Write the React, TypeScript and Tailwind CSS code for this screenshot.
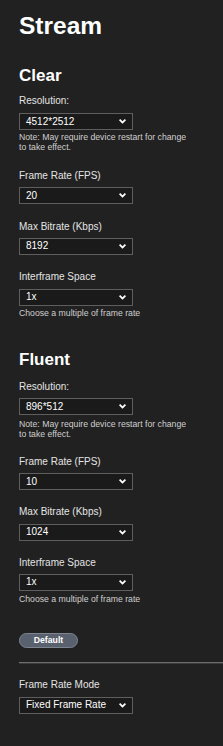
import React from "react";

const Chevron = () => (
  <svg width="7" height="5" viewBox="0 0 7 5" className="shrink-0">
    <path d="M0 1.2 L1.2 0 L3.5 2.3 L5.8 0 L7 1.2 L3.5 4.7 Z" fill="#ffffff" />
  </svg>
);

const Select = ({ value, className = "" }: { value: string; className?: string }) => (
  <div
    className={`flex h-[17px] w-[114px] items-center justify-between border border-[#5e5e5e] bg-[#1a1a1a] pl-[6px] pr-[6px] text-[10px] leading-[12px] text-white ${className}`}
  >
    <span>{value}</span>
    <Chevron />
  </div>
);

const Label = ({ children, className = "" }: { children: React.ReactNode; className?: string }) => (
  <div className={`text-[10px] leading-[12px] text-[#e4e4e4] ${className}`}>{children}</div>
);

const Note = ({ children, className = "" }: { children: React.ReactNode; className?: string }) => (
  <div className={`max-w-[171px] text-[8.7px] leading-[10.4px] text-[#cfcfcf] ${className}`}>{children}</div>
);

export default function App() {
  return (
    <div
      className="min-h-screen w-full overflow-hidden bg-[#212121] pt-[11px] pb-[30px]"
      style={{ fontFamily: '"Liberation Sans", Arial, sans-serif' }}
    >
      <div className="pl-[19px]">
        <h1 className="text-[24.5px] font-bold leading-[29px] text-white">Stream</h1>

        <h2 className="mt-[26px] text-[17px] font-bold leading-[20px] text-white">Clear</h2>
        <Label className="mt-[9px]">Resolution:</Label>
        <Select value="4512*2512" className="mt-[6px]" />
        <Note className="mt-[2px]">Note: May require device restart for change to take effect.</Note>

        <Label className="mt-[17px]">Frame Rate (FPS)</Label>
        <Select value="20" className="mt-[5.5px]" />

        <Label className="mt-[16.5px]">Max Bitrate (Kbps)</Label>
        <Select value="8192" className="mt-[5px]" />

        <Label className="mt-[16px]">Interframe Space</Label>
        <Select value="1x" className="mt-[6px]" />
        <Note className="mt-[2px]">Choose a multiple of frame rate</Note>

        <h2 className="mt-[32px] text-[17px] font-bold leading-[20px] text-white">Fluent</h2>
        <Label className="mt-[11px]">Resolution:</Label>
        <Select value="896*512" className="mt-[5px]" />
        <Note className="mt-[3.5px]">Note: May require device restart for change to take effect.</Note>

        <Label className="mt-[16.5px]">Frame Rate (FPS)</Label>
        <Select value="10" className="mt-[5px]" />

        <Label className="mt-[16px]">Max Bitrate (Kbps)</Label>
        <Select value="1024" className="mt-[5.7px]" />

        <Label className="mt-[16.2px]">Interframe Space</Label>
        <Select value="1x" className="mt-[5px]" />
        <Note className="mt-[3.5px]">Choose a multiple of frame rate</Note>

        <button className="mt-[28px] flex h-[15px] w-[59px] items-center justify-center rounded-full border border-[#7d8591] bg-[#59616e] text-[8.7px] font-bold leading-[10px] text-white">
          Default
        </button>

        <div className="mt-[14px] h-[2px] border-t border-b border-t-[#6e6e6e] border-b-[#3a3a3a]" />

        <Label className="mt-[15.6px]">Frame Rate Mode</Label>
        <Select value="Fixed Frame Rate" className="mt-[5.4px]" />
      </div>
    </div>
  );
}
